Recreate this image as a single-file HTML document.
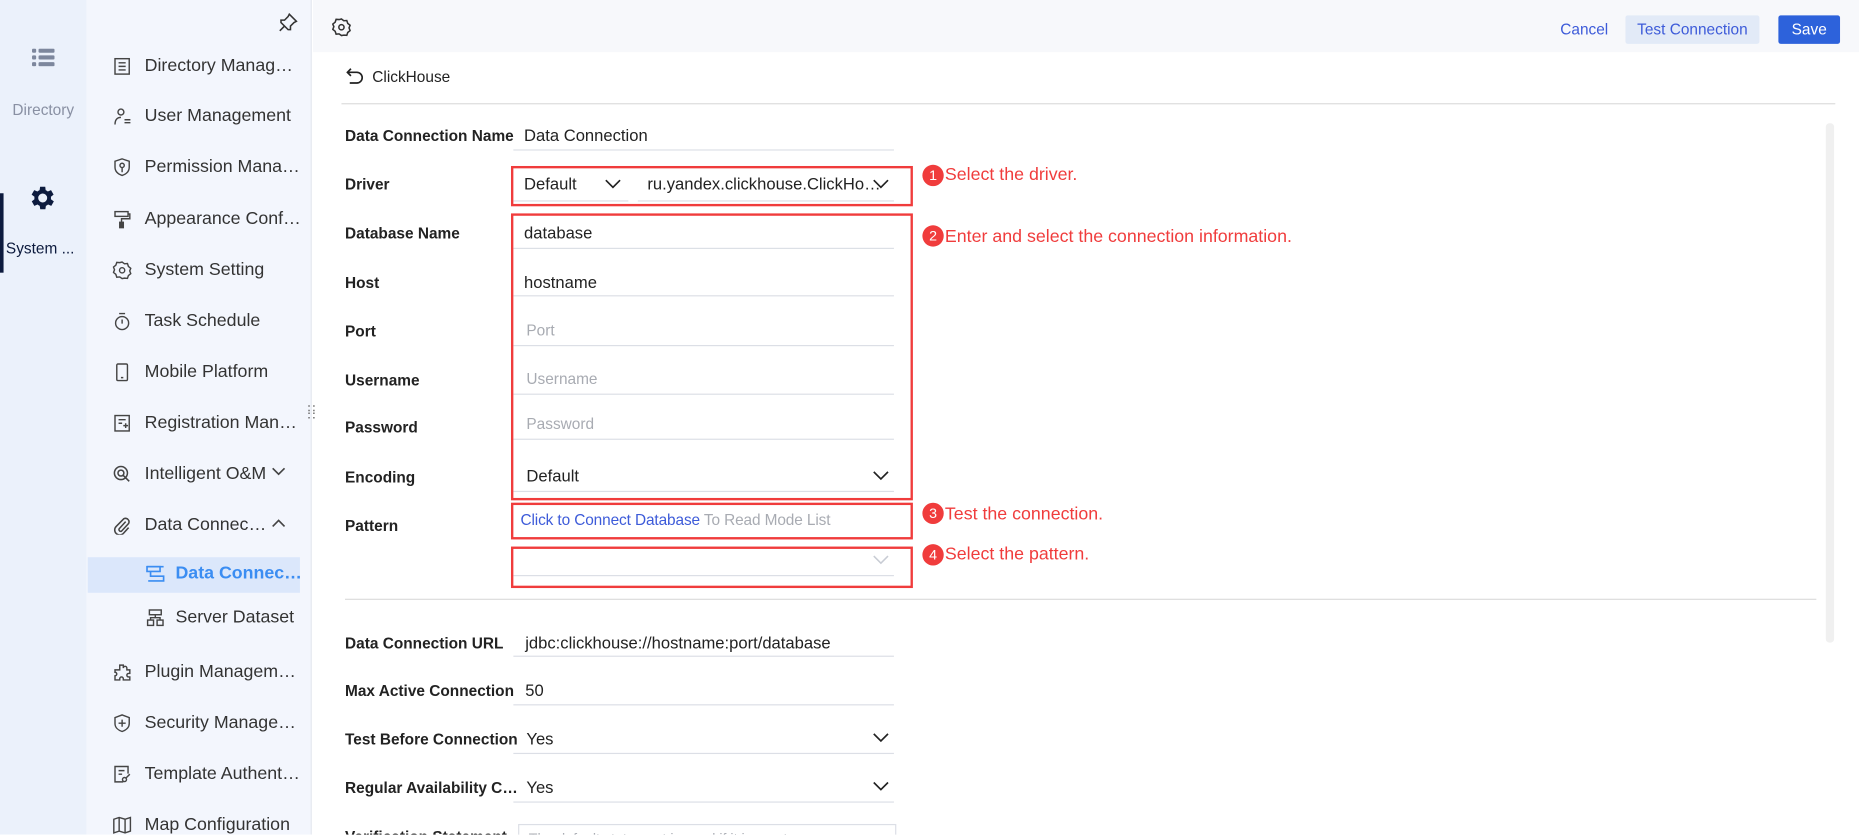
<!DOCTYPE html>
<html><head><meta charset="utf-8"><style>
*{box-sizing:border-box;margin:0;padding:0}
html,body{width:1859px;height:835px;overflow:hidden;background:#fff;font-family:"Liberation Sans",Arial,sans-serif}
#s{position:absolute;left:0;top:0;width:1568px;height:704px;transform:scale(1.18559);transform-origin:0 0;overflow:hidden}
.a{position:absolute}
.rail{left:0;top:0;width:73px;height:704px;background:#ebf1fb}
.side{left:73px;top:0;width:190px;height:704px;background:#f3f6fd;border-right:1px solid #e6e9f0}
.it{position:absolute;left:49px;font-size:15px;color:#333;white-space:nowrap;line-height:18px}
.ic{position:absolute;left:22px;width:16px;height:16px}
.top{left:264px;top:0;width:1304px;height:44px;background:#f7f8fb}
.lb{position:absolute;left:291px;font-size:13px;font-weight:bold;color:#222;line-height:16px;white-space:nowrap}
.in{position:absolute;border-bottom:1px solid #dcdfe6;font-size:14px;color:#222;line-height:18px;padding-left:9px;white-space:nowrap}
.ph{color:#a8abb2;font-size:13px}
.red{position:absolute;border:2px solid #f03c3c}
.num{position:absolute;left:778px;width:18px;height:18px;border-radius:50%;background:#f03c3c;color:#fff;font-size:12px;text-align:center;line-height:18px}
.ann{position:absolute;left:797px;font-size:15px;color:#f03c3c;line-height:18px;white-space:nowrap}
.chev{position:absolute;width:14px;height:9px}
</style></head><body><div id="s">
<div class="a rail"></div>
<div class="a" style="left:0;top:163px;width:3px;height:67px;background:#0d1b3e"></div>
<svg class="a" style="left:27px;top:41px" width="19" height="15" viewBox="0 0 19 15" fill="#7d879d"><rect x="0" y="0" width="3.5" height="3.5" rx="1"/><rect x="5.5" y="0" width="13.5" height="3.5" rx="1"/><rect x="0" y="5.7" width="3.5" height="3.5" rx="1"/><rect x="5.5" y="5.7" width="13.5" height="3.5" rx="1"/><rect x="0" y="11.4" width="3.5" height="3.5" rx="1"/><rect x="5.5" y="11.4" width="13.5" height="3.5" rx="1"/></svg>
<div class="a" style="left:0;width:73px;top:85px;text-align:center;font-size:13px;color:#8990a3">Directory</div>
<svg class="a" style="left:23px;top:154px" width="26" height="26" viewBox="0 0 24 24"><path fill="#0d1b3e" d="M19.4 13a7.5 7.5 0 0 0 0-2l2.1-1.6-2-3.5-2.5 1a7.6 7.6 0 0 0-1.7-1L15 3.2h-4l-.4 2.7a7.6 7.6 0 0 0-1.7 1l-2.5-1-2 3.5L6.6 11a7.5 7.5 0 0 0 0 2l-2.1 1.6 2 3.5 2.5-1a7.6 7.6 0 0 0 1.7 1l.4 2.7h4l.4-2.7a7.6 7.6 0 0 0 1.7-1l2.5 1 2-3.5zM13 15.5a3.5 3.5 0 1 1 0-7 3.5 3.5 0 0 1 0 7z" transform="translate(-1 0)"/></svg>
<div class="a" style="left:5px;top:202px;font-size:13px;color:#0d1b3e">System ...</div>

<div class="a side">
<svg class="a" style="left:162px;top:11px" width="16" height="16" viewBox="0 0 16 16" fill="none" stroke="#333" stroke-width="1.3"><path d="M9 1l6 6-2 1-3 3 0 3-2 0-6-6 0-2 3 0 3-3z M1 15l4-4"/></svg>
<div class="it" style="top:47px"><svg class="ic" style="left:-27px;top:1px" viewBox="0 0 16 16" fill="none" stroke="#444" stroke-width="1.2"><rect x="2" y="1.5" width="12" height="13"/><path d="M5 5h6M5 8h6M5 11h6"/></svg>Directory Manag…</div>
<div class="it" style="top:89px"><svg class="ic" style="left:-27px;top:1px" viewBox="0 0 16 16" fill="none" stroke="#444" stroke-width="1.2"><circle cx="7" cy="4.5" r="2.5"/><path d="M2 15c0-4 2-6 5-6M10 11h5M10 13.5h5"/></svg>User Management</div>
<div class="it" style="top:132px"><svg class="ic" style="left:-27px;top:1px" viewBox="0 0 16 16" fill="none" stroke="#444" stroke-width="1.2"><path d="M8 1l6 2v5c0 4-3 6-6 7-3-1-6-3-6-7V3z"/><circle cx="8" cy="6.5" r="1.8"/><path d="M8 8.3v4"/></svg>Permission Mana…</div>
<div class="it" style="top:176px"><svg class="ic" style="left:-27px;top:1px" viewBox="0 0 16 16" fill="none" stroke="#444" stroke-width="1.2"><rect x="2" y="1.5" width="11" height="4"/><path d="M13 3.5h1.5v4H7.5v3"/><rect x="6" y="10.5" width="3" height="4.5" fill="#444"/></svg>Appearance Conf…</div>
<div class="it" style="top:219px"><svg class="ic" style="left:-27px;top:1px" viewBox="0 0 16 16" fill="none" stroke="#444" stroke-width="1.2"><path d="M8 1l2 1.5 2.5-.2.8 2.4 2 1.6-.9 2.2.9 2.3-2 1.6-.8 2.4-2.5-.2L8 15l-2-1.4-2.5.2-.8-2.4-2-1.6.9-2.3-.9-2.2 2-1.6.8-2.4 2.5.2z"/><circle cx="8" cy="8" r="2.2"/></svg>System Setting</div>
<div class="it" style="top:262px"><svg class="ic" style="left:-27px;top:1px" viewBox="0 0 16 16" fill="none" stroke="#444" stroke-width="1.2"><circle cx="8" cy="9.5" r="5.5"/><path d="M5.5 1.5h5M8 6.5v3.5"/></svg>Task Schedule</div>
<div class="it" style="top:305px"><svg class="ic" style="left:-27px;top:1px" viewBox="0 0 16 16" fill="none" stroke="#444" stroke-width="1.2"><rect x="3.5" y="1" width="9" height="14" rx="1"/><path d="M7 12.5h2"/></svg>Mobile Platform</div>
<div class="it" style="top:348px"><svg class="ic" style="left:-27px;top:1px" viewBox="0 0 16 16" fill="none" stroke="#444" stroke-width="1.2"><rect x="2" y="1.5" width="12" height="13"/><path d="M5 5h6M5 8h3M9 10h4M11 8v4"/></svg>Registration Man…</div>
<div class="it" style="top:391px"><svg class="ic" style="left:-27px;top:1px" viewBox="0 0 16 16" fill="none" stroke="#444" stroke-width="1.3"><circle cx="7" cy="7" r="5.5"/><circle cx="7" cy="7" r="2.5"/><path d="M9 9l5 5"/></svg>Intelligent O&amp;M <svg width="12" height="8" viewBox="0 0 12 8" style="vertical-align:2px"><path d="M1 1l5 5 5-5" fill="none" stroke="#444" stroke-width="1.4"/></svg></div>
<div class="it" style="top:434px"><svg class="ic" style="left:-27px;top:1px" viewBox="0 0 16 16" fill="none" stroke="#444" stroke-width="1.3"><path d="M11 5l-5.5 6a1.5 1.5 0 0 0 2 2l6-6.5a3 3 0 0 0-4-4L3 9a4.2 4.2 0 0 0 6 6l4.5-5"/></svg>Data Connec… <svg width="12" height="8" viewBox="0 0 12 8" style="vertical-align:2px"><path d="M1 7l5-5 5 5" fill="none" stroke="#444" stroke-width="1.4"/></svg></div>
<div class="a" style="left:1px;top:470px;width:179px;height:30px;background:#dbe7fb"></div>
<div class="it" style="top:475px;left:75px;color:#3b8df2;font-weight:bold;font-size:15px"><svg class="ic" style="left:-25px;top:1px" viewBox="0 0 16 16" fill="none" stroke="#3b8df2" stroke-width="1.4"><path d="M1 2h11v4H1zM4 6v4h11v4H2"/><path d="M1 2h14"/></svg>Data Connec…</div>
<div class="it" style="top:512px;left:75px"><svg class="ic" style="left:-25px;top:1px" viewBox="0 0 16 16" fill="none" stroke="#444" stroke-width="1.2"><rect x="3" y="1.5" width="10" height="4"/><rect x="1.5" y="10" width="5" height="4.5"/><rect x="9.5" y="10" width="5" height="4.5"/><path d="M8 5.5v2.5M4 10V8h8v2"/></svg>Server Dataset</div>
<div class="it" style="top:558px"><svg class="ic" style="left:-27px;top:1px" viewBox="0 0 16 16" fill="none" stroke="#444" stroke-width="1.2"><path d="M6 2h3v2.5a1.5 1.5 0 0 1 3 0V6h2.5v3h-1a1.5 1.5 0 0 0 0 3h1v2.5H9v-1a1.5 1.5 0 0 0-3 0v1H2V11a1.5 1.5 0 0 0 0-3V6h4z"/></svg>Plugin Managem…</div>
<div class="it" style="top:601px"><svg class="ic" style="left:-27px;top:1px" viewBox="0 0 16 16" fill="none" stroke="#444" stroke-width="1.2"><path d="M8 1l6 2.3v5c0 3.5-3 5.7-6 6.7-3-1-6-3.2-6-6.7v-5z"/><path d="M8 5v6M5 8h6"/></svg>Security Manage…</div>
<div class="it" style="top:644px"><svg class="ic" style="left:-27px;top:1px" viewBox="0 0 16 16" fill="none" stroke="#444" stroke-width="1.2"><path d="M9 14.5H2v-13h11v6M5 5h5M5 8h3"/><circle cx="10" cy="12.5" r="1.7"/><path d="M11.5 11l3-3"/></svg>Template Authent…</div>
<div class="it" style="top:687px"><svg class="ic" style="left:-27px;top:1px" viewBox="0 0 16 16" fill="none" stroke="#444" stroke-width="1.2"><path d="M1 3l4.5-1.5 5 1.5L15 1.5V13l-4.5 1.5-5-1.5L1 14.5zM5.5 1.5V13M10.5 3v11.5"/></svg>Map Configuration</div>
</div>
<div class="a" style="left:259px;top:345px;font-size:10px;color:#555;line-height:4px;letter-spacing:1px">⁚⁚<br>⁚⁚</div>

<div class="a top"></div>
<svg class="a" style="left:280px;top:15px" width="16" height="16" viewBox="0 0 16 16" fill="none" stroke="#333" stroke-width="1.3"><path d="M8 1l2 1.5 2.5-.2.8 2.4 2 1.6-.9 2.2.9 2.3-2 1.6-.8 2.4-2.5-.2L8 15l-2-1.4-2.5.2-.8-2.4-2-1.6.9-2.3-.9-2.2 2-1.6.8-2.4 2.5.2z"/><circle cx="8" cy="8" r="2.2"/></svg>
<div class="a" style="left:1316px;top:17px;font-size:13px;color:#3d5bd9">Cancel</div>
<div class="a" style="left:1371px;top:13px;width:113px;height:24px;background:#e2eaf7;border-radius:2px;font-size:13px;color:#3d5bd9;text-align:center;line-height:24px">Test Connection</div>
<div class="a" style="left:1500px;top:13px;width:52px;height:24px;background:#2d62db;border-radius:2px;font-size:13px;color:#fff;text-align:center;line-height:24px">Save</div>

<svg class="a" style="left:292px;top:57px" width="15" height="14" viewBox="0 0 15 14" fill="none" stroke="#222" stroke-width="1.4"><path d="M4 1L1 4l3 3M1 4h8a4.5 4.5 0 0 1 0 9H3"/></svg>
<div class="a" style="left:314px;top:57px;font-size:13px;color:#222">ClickHouse</div>
<div class="a" style="left:288px;top:87px;width:1260px;height:1px;background:#dcdcdc"></div>
<div class="a" style="left:1540px;top:104px;width:7px;height:438px;background:#f0f0f0;border-radius:3px"></div>

<div class="lb" style="top:107px">Data Connection Name</div>
<div class="in" style="left:433px;top:105px;width:321px;height:22px">Data Connection</div>
<div class="lb" style="top:148px">Driver</div>
<div class="in" style="left:433px;top:146px;width:97px;height:24px">Default</div>
<svg class="chev" style="left:510px;top:151px" viewBox="0 0 14 9"><path d="M1 1l6 6 6-6" fill="none" stroke="#222" stroke-width="1.4"/></svg>
<div class="in" style="left:538px;top:146px;width:216px;height:24px;padding-left:8px">ru.yandex.clickhouse.ClickHo…</div>
<svg class="chev" style="left:736px;top:151px" viewBox="0 0 14 9"><path d="M1 1l6 6 6-6" fill="none" stroke="#222" stroke-width="1.4"/></svg>
<div class="lb" style="top:189px">Database Name</div>
<div class="in" style="left:433px;top:187px;width:321px;height:23px">database</div>
<div class="lb" style="top:231px">Host</div>
<div class="in" style="left:433px;top:229px;width:321px;height:21px">hostname</div>
<div class="lb" style="top:272px">Port</div>
<div class="in ph" style="left:433px;top:270px;width:321px;height:22px;padding-left:11px">Port</div>
<div class="lb" style="top:313px">Username</div>
<div class="in ph" style="left:433px;top:311px;width:321px;height:22px;padding-left:11px">Username</div>
<div class="lb" style="top:353px">Password</div>
<div class="in ph" style="left:433px;top:349px;width:321px;height:22px;padding-left:11px">Password</div>
<div class="lb" style="top:395px">Encoding</div>
<div class="in" style="left:433px;top:392px;width:321px;height:23px;padding-left:11px">Default</div>
<svg class="chev" style="left:736px;top:397px" viewBox="0 0 14 9"><path d="M1 1l6 6 6-6" fill="none" stroke="#222" stroke-width="1.4"/></svg>
<div class="lb" style="top:436px">Pattern</div>
<div class="a" style="left:439px;top:431px;font-size:13px;color:#3d5bd9;white-space:nowrap;letter-spacing:-0.1px">Click to Connect Database <span style="color:#a8abb2">To Read Mode List</span></div>
<div class="in" style="left:433px;top:462px;width:321px;height:24px"></div>
<svg class="chev" style="left:736px;top:468px" viewBox="0 0 14 9"><path d="M1 1l6 6 6-6" fill="none" stroke="#c8ccd4" stroke-width="1.3"/></svg>

<div class="red" style="left:431px;top:140px;width:339px;height:34px"></div>
<div class="red" style="left:431px;top:180px;width:339px;height:242px"></div>
<div class="red" style="left:431px;top:424px;width:339px;height:31px"></div>
<div class="red" style="left:431px;top:461px;width:339px;height:35px"></div>
<div class="num" style="top:139px">1</div><div class="ann" style="top:139px">Select the driver.</div>
<div class="num" style="top:190px">2</div><div class="ann" style="top:191px">Enter and select the connection information.</div>
<div class="num" style="top:424px">3</div><div class="ann" style="top:425px">Test the connection.</div>
<div class="num" style="top:459px">4</div><div class="ann" style="top:459px">Select the pattern.</div>

<div class="a" style="left:291px;top:505px;width:1241px;height:1px;background:#dcdcdc"></div>

<div class="lb" style="top:535px">Data Connection URL</div>
<div class="in" style="left:433px;top:533px;width:321px;height:21px;padding-left:10px">jdbc:clickhouse://hostname:port/database</div>
<div class="lb" style="top:575px">Max Active Connection</div>
<div class="in" style="left:433px;top:573px;width:321px;height:22px;padding-left:10px">50</div>
<div class="lb" style="top:616px">Test Before Connection</div>
<div class="in" style="left:433px;top:614px;width:321px;height:22px;padding-left:11px">Yes</div>
<svg class="chev" style="left:736px;top:618px" viewBox="0 0 14 9"><path d="M1 1l6 6 6-6" fill="none" stroke="#222" stroke-width="1.4"/></svg>
<div class="lb" style="top:657px">Regular Availability C…</div>
<div class="in" style="left:433px;top:655px;width:321px;height:22px;padding-left:11px">Yes</div>
<svg class="chev" style="left:736px;top:659px" viewBox="0 0 14 9"><path d="M1 1l6 6 6-6" fill="none" stroke="#222" stroke-width="1.4"/></svg>
<div class="lb" style="top:698px">Verification Statement</div>
<div class="a" style="left:437px;top:695px;width:319px;height:30px;border:1px solid #dcdfe6;font-size:12px;color:#a8abb2;padding:4px 8px;white-space:nowrap;overflow:hidden">The default statement is used if it is empty</div>
</div></body></html>
